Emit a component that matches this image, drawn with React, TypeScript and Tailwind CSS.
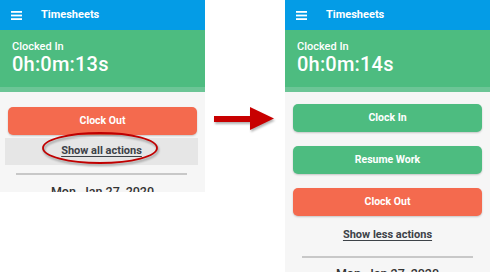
import React from 'react';

const Hamburger = () => (
  <svg width="11" height="9" viewBox="0 0 11 9" className="shrink-0">
    <rect x="0" y="0" width="11" height="1.8" fill="white" />
    <rect x="0" y="3.6" width="11" height="1.8" fill="white" />
    <rect x="0" y="7.2" width="11" height="1.8" fill="white" />
  </svg>
);

const Header = ({ time }: { time: string }) => (
  <>
    <div className="h-[30px] bg-[#049ce6] flex items-center pl-[11px]">
      <Hamburger />
      <span className="ml-[19px] text-[11px] font-bold text-white">Timesheets</span>
    </div>
    <div className="h-[57px] bg-[#4dbc80] px-[12px] pt-[10px] text-white">
      <div className="text-[11px] font-medium leading-[13px]">Clocked In</div>
      <div className="text-[20px] font-medium leading-[22px] tracking-[0.2px]">{time}</div>
    </div>
    <div className="h-[5px] bg-[#6cc596]" />
  </>
);

const ActionButton = ({ label, color }: { label: string; color: string }) => (
  <div
    className={`h-[28px] rounded-[5px] flex items-center justify-center text-white text-[10.5px] font-bold shadow-[0_1px_2px_rgba(0,0,0,0.2)] ${color}`}
  >
    {label}
  </div>
);

const LeftPanel = () => (
  <div className="w-[205px] h-[192px] shrink-0 overflow-hidden bg-[#f6f6f6]">
    <Header time="0h:0m:13s" />
    <div className="mx-[8px] mt-[15px]">
      <ActionButton label="Clock Out" color="bg-[#f46a4e]" />
    </div>
    <div className="relative ml-[5px] mr-[7px] mt-[3px] h-[27px] bg-[#e6e6e6] flex items-center justify-center">
      <span className="text-[11px] font-bold text-[#3d4248] underline underline-offset-2">Show all actions</span>
      <svg
        width="124"
        height="38"
        viewBox="0 0 124 38"
        className="absolute left-[33px] top-[-8px] drop-shadow-[1px_2px_1px_rgba(0,0,0,0.35)]"
      >
        <ellipse cx="62" cy="18" rx="57" ry="15" fill="none" stroke="#c00000" strokeWidth="1.8" />
      </svg>
    </div>
    <div className="mt-[8px] ml-[16px] mr-[18px] h-[1.5px] bg-[#c8c8c8]" />
    <div className="mt-[8px] text-center text-[12.5px] font-medium text-[#333]">Mon, Jan 27, 2020</div>
  </div>
);

const RightPanel = () => (
  <div className="w-[205px] h-[272px] shrink-0 overflow-hidden bg-[#f6f6f6]">
    <Header time="0h:0m:14s" />
    <div className="mx-[8px] mt-[12px] flex flex-col gap-[14px]">
      <ActionButton label="Clock In" color="bg-[#4dbc80]" />
      <ActionButton label="Resume Work" color="bg-[#4dbc80]" />
      <ActionButton label="Clock Out" color="bg-[#f46a4e]" />
    </div>
    <div className="mt-[5px] text-center">
      <span className="text-[11px] font-bold text-[#3d4248] underline underline-offset-2">Show less actions</span>
    </div>
    <div className="mt-[11px] ml-[17px] mr-[17px] h-[1.5px] bg-[#c8c8c8]" />
    <div className="mt-[7px] text-center text-[12.5px] font-medium text-[#333]">Mon, Jan 27, 2020</div>
  </div>
);

const Arrow = () => (
  <svg width="62" height="28" viewBox="0 0 62 28" className="drop-shadow-[1px_2px_1px_rgba(0,0,0,0.3)]">
    <rect x="0" y="11" width="38" height="6" fill="#c80000" />
    <polygon points="36,2 60,13.5 36,25" fill="#c80000" />
  </svg>
);

export default function App() {
  return (
    <div
      className="w-[490px] h-[272px] bg-white flex items-start overflow-hidden"
      style={{ fontFamily: 'Roboto, "Liberation Sans", sans-serif' }}
    >
      <LeftPanel />
      <div className="w-[80px] shrink-0 flex justify-start pl-[9px] pt-[105px]">
        <Arrow />
      </div>
      <RightPanel />
    </div>
  );
}
